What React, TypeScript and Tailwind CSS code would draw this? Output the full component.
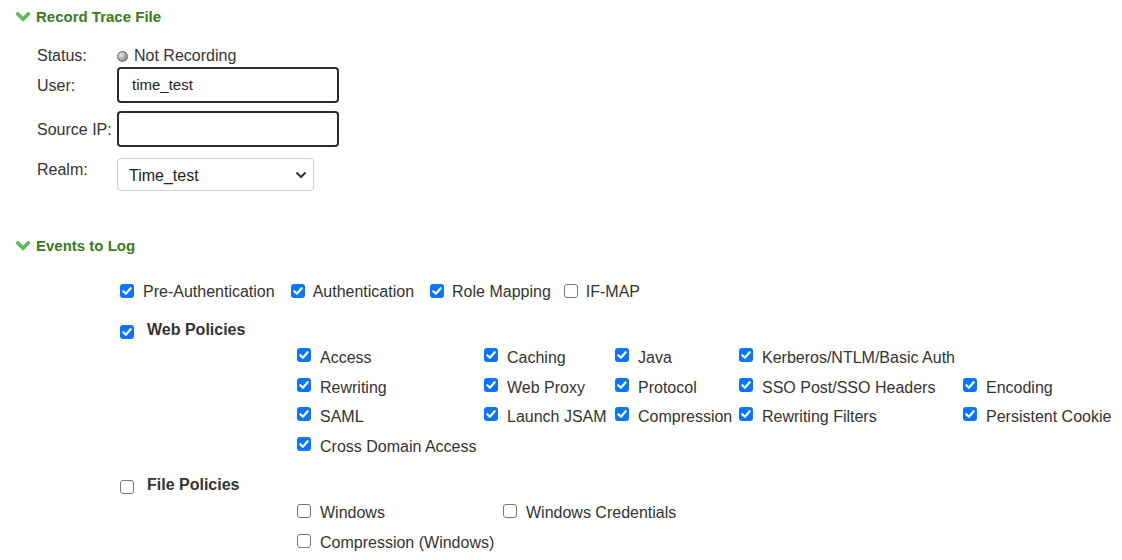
import React from "react";

const font = { fontFamily: '"Liberation Sans", Arial, sans-serif' };

function Chevron() {
  return (
    <svg width="14" height="10" viewBox="0 0 14 10" className="shrink-0">
      <polyline points="1.8,2 7,7.2 12.2,2" fill="none" stroke="#5cb85c" strokeWidth="3.6" strokeLinecap="square" />
    </svg>
  );
}

function Header({ title }: { title: string }) {
  return (
    <div className="h-[34px] flex items-center pl-[16px] gap-[6px]">
      <Chevron />
      <span className="text-[15px] font-bold text-[#3a7a1e] leading-[20px]">{title}</span>
    </div>
  );
}

function Cb({ checked, cls = "" }: { checked: boolean; cls?: string }) {
  if (checked) {
    return (
      <span className={"block shrink-0 w-[14px] h-[14px] rounded-[3px] bg-[#0b75f5] " + cls}>
        <svg width="14" height="14" viewBox="0 0 14 14" className="block">
          <polyline points="3.3,7.2 5.9,9.8 10.7,4.2" fill="none" stroke="#fff" strokeWidth="2.1" strokeLinecap="round" strokeLinejoin="round" />
        </svg>
      </span>
    );
  }
  return <span className={"block shrink-0 w-[14px] h-[14px] rounded-[3px] border border-[#767676] bg-white " + cls} />;
}

function Item({ label, checked = true }: { label: string; checked?: boolean }) {
  return (
    <div className="flex items-start">
      <Cb checked={checked} cls={checked ? "mt-[0px]" : "mt-[1px]"} />
      <span className="ml-[9px] leading-[20px] whitespace-nowrap">{label}</span>
    </div>
  );
}

export default function App() {
  const web: [string, number, number][] = [
    ["Access", 1, 1],
    ["Caching", 2, 1],
    ["Java", 3, 1],
    ["Kerberos/NTLM/Basic Auth", 4, 1],
    ["Rewriting", 1, 2],
    ["Web Proxy", 2, 2],
    ["Protocol", 3, 2],
    ["SSO Post/SSO Headers", 4, 2],
    ["Encoding", 5, 2],
    ["SAML", 1, 3],
    ["Launch JSAM", 2, 3],
    ["Compression", 3, 3],
    ["Rewriting Filters", 4, 3],
    ["Persistent Cookie", 5, 3],
    ["Cross Domain Access", 1, 4],
  ];
  const colCls = ["", "col-start-1", "col-start-2", "col-start-3", "col-start-4", "col-start-5"];
  const rowCls = ["", "row-start-1", "row-start-2", "row-start-3", "row-start-4"];
  return (
    <div style={font} className="w-[1122px] h-[560px] bg-white text-[16px] text-[#333] overflow-hidden">
      <Header title="Record Trace File" />
      <div className="mt-[12px] pl-[37px] flex flex-col">
        <div className="flex h-[20px] items-center">
          <span className="w-[80px] leading-[20px]">Status:</span>
          <span className="w-[11px] h-[11px] rounded-full border border-[#666] bg-[radial-gradient(circle_at_35%_35%,#ececec,#a0a0a0_55%,#6a6a6a)]" />
          <span className="ml-[6px] leading-[20px]">Not Recording</span>
        </div>
        <div className="flex items-center mt-[1px]">
          <span className="w-[80px] leading-[20px] mt-[1px]">User:</span>
          <div className="w-[222px] h-[36px] border-2 border-[#2b2b2b] rounded-[4px] flex items-center pl-[13px] pt-[1px] text-[15px] text-[#222]">
            time_test
          </div>
        </div>
        <div className="flex items-center mt-[8px]">
          <span className="w-[80px] leading-[20px] mt-[1px]">Source IP:</span>
          <div className="w-[222px] h-[36px] border-2 border-[#2b2b2b] rounded-[4px]" />
        </div>
        <div className="flex items-start mt-[11px]">
          <span className="w-[80px] leading-[20px] mt-[2px]">Realm:</span>
          <div className="w-[197px] h-[33px] border border-[#cfcfcf] rounded-[4px] flex items-center justify-between pl-[11px] pr-[6px] text-[#222]">
            <span className="pt-[3px]">Time_test</span>
            <svg width="12" height="8" viewBox="0 0 12 8" className="mt-[1px]">
              <polyline points="1.5,1.5 6,6 10.5,1.5" fill="none" stroke="#333" strokeWidth="2" />
            </svg>
          </div>
        </div>
      </div>

      <div className="mt-[38px]">
        <Header title="Events to Log" />
      </div>

      <div className="pl-[120px]">
        <div className="mt-[19px] flex items-start">
          <div className="flex items-start mr-[16px]">
            <Cb checked cls="mt-[2px]" />
            <span className="ml-[9px] leading-[20px]">Pre-Authentication</span>
          </div>
          <div className="flex items-start mr-[16px]">
            <Cb checked cls="mt-[2px]" />
            <span className="ml-[8px] leading-[20px]">Authentication</span>
          </div>
          <div className="flex items-start mr-[13px]">
            <Cb checked cls="mt-[2px]" />
            <span className="ml-[8px] leading-[20px]">Role Mapping</span>
          </div>
          <div className="flex items-start">
            <Cb checked={false} cls="mt-[2px]" />
            <span className="ml-[8px] leading-[20px]">IF-MAP</span>
          </div>
        </div>

        <div className="mt-[18px] flex items-start">
          <Cb checked cls="mt-[5px]" />
          <span className="ml-[13px] leading-[20px] font-bold">Web Policies</span>
        </div>

        <div className="mt-[8px] ml-[177px] grid grid-cols-[187px_131px_124px_224px_auto] auto-rows-[29.5px]">
          {web.map(([l, c, r]) => (
            <div key={l} className={colCls[c] + " " + rowCls[r]}>
              <Item label={l} />
            </div>
          ))}
        </div>

        <div className="mt-[9px] flex items-start">
          <Cb checked={false} cls="mt-[5px]" />
          <span className="ml-[13px] leading-[20px] font-bold">File Policies</span>
        </div>

        <div className="mt-[8px] ml-[177px] grid grid-cols-[206px_auto] auto-rows-[30px]">
          <Item label="Windows" checked={false} />
          <Item label="Windows Credentials" checked={false} />
          <Item label="Compression (Windows)" checked={false} />
        </div>
      </div>
    </div>
  );
}
